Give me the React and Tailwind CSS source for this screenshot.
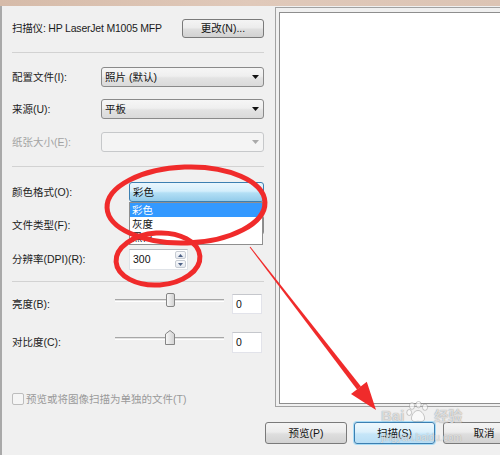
import React from "react";

const FONT = "font-['Liberation_Sans','Noto_Sans_CJK_SC',sans-serif]";

function Caret({ muted }) {
  return (
    <svg width="7" height="4" viewBox="0 0 7 4" className="shrink-0">
      <path d="M0 0H7L3.5 4Z" fill={muted ? "#a9a9a9" : "#121212"} />
    </svg>
  );
}

function Combo({ text, muted, hot, caret = true }) {
  const look = muted
    ? "border-[#c6c8ca] bg-[#f4f4f4]"
    : hot
    ? "border-[#3c7fb1] bg-[linear-gradient(#eaf6fd_0%,#d4eefb_45%,#b3dff5_55%,#93cbea_100%)]"
    : "border-[#8a8a8a] bg-[linear-gradient(#f6f6f6_0%,#efefef_45%,#e3e3e3_55%,#dadada_100%)]";
  return (
    <div
      className={`flex h-full flex-1 items-center justify-between rounded-[3px] border pl-[3px] pr-[4px] ${look}`}
    >
      <span className="text-[10.5px] leading-none text-[#111]">{text}</span>
      {caret && <Caret muted={muted} />}
    </div>
  );
}

function Label({ children, w, muted }) {
  return (
    <div
      className={`shrink-0 text-[10.5px] leading-none ${muted ? "text-[#a3a3a3]" : "text-[#1c1c1c]"}`}
      style={{ width: w }}
    >
      {children}
    </div>
  );
}

function Rule({ className }) {
  return <div className={`h-px bg-[#d2d2d2] ${className}`} />;
}

function Slider({ pointed }) {
  return (
    <div className="relative h-full w-[109px] shrink-0">
      <div className="absolute left-0 right-0 top-[5px] h-[3px] border-t border-b border-t-[#a7a7a7] border-b-[#ffffff] bg-[#e3e3e3]" />
      {pointed ? (
        <svg
          width="10"
          height="15"
          viewBox="0 0 10 15"
          className="absolute left-[50px] top-[-2px]"
        >
          <defs>
            <linearGradient id="thumbFill" x1="0" x2="1" y1="0" y2="0">
              <stop offset="0" stopColor="#f7f7f7" />
              <stop offset="1" stopColor="#d2d2d2" />
            </linearGradient>
          </defs>
          <path
            d="M5 0.5L9.5 4V14.5H0.5V4Z"
            fill="url(#thumbFill)"
            stroke="#858585"
            strokeWidth="1"
            strokeLinejoin="round"
          />
        </svg>
      ) : (
        <div className="absolute left-[51px] top-[-1px] h-[14px] w-[9px] rounded-[2px] border border-[#858585] bg-[linear-gradient(90deg,#f7f7f7,#d2d2d2)]" />
      )}
    </div>
  );
}

function NumField({ value }) {
  return (
    <div className="ml-[8px] flex h-full w-[30px] items-center border border-[#e2e3ea] border-t-[#c5c7cc] bg-white pl-[3px] text-[10.5px] leading-none text-[#111]">
      {value}
    </div>
  );
}

function Spin({ value }) {
  return (
    <div className="flex h-full w-[59px] border border-[#dfe3e8] border-t-[#b5b8bd] bg-white">
      <div className="flex flex-1 items-center pl-[3px] text-[10.5px] leading-none text-[#111]">
        {value}
      </div>
      <div className="flex w-[12px] flex-col gap-px py-px pr-px">
        <div className="flex flex-1 items-center justify-center rounded-[2px] border border-[#c7ccd3] bg-[linear-gradient(#f8f9fb,#e4e8ee)]">
          <svg width="5" height="3" viewBox="0 0 5 3">
            <path d="M0 3L2.5 0L5 3Z" fill="#4d6185" />
          </svg>
        </div>
        <div className="flex flex-1 items-center justify-center rounded-[2px] border border-[#c7ccd3] bg-[linear-gradient(#f8f9fb,#e4e8ee)]">
          <svg width="5" height="3" viewBox="0 0 5 3">
            <path d="M0 0L2.5 3L5 0Z" fill="#4d6185" />
          </svg>
        </div>
      </div>
    </div>
  );
}

function Button({ children, primary, className = "" }) {
  const look = primary
    ? "border-[#3c7fb1] bg-[linear-gradient(#eef8fd_0%,#dcf0fb_45%,#c6e6f8_55%,#b8def5_100%)] shadow-[0_0_0_1px_#a9dcf6]"
    : "border-[#7a7a7a] bg-[linear-gradient(#f4f4f4_0%,#ececec_45%,#dedede_55%,#d2d2d2_100%)]";
  return (
    <div
      className={`flex h-[22px] items-center justify-center rounded-[3px] border text-[10.5px] leading-none text-[#141414] ${look} ${className}`}
    >
      {children}
    </div>
  );
}

function Paw() {
  return (
    <svg width="24" height="22" viewBox="0 0 24 22">
      <g fill="rgba(255,255,255,0.6)" stroke="rgba(110,110,110,0.45)" strokeWidth="0.8">
        <ellipse cx="6" cy="5" rx="2.6" ry="3.4" />
        <ellipse cx="12.5" cy="3.6" rx="2.6" ry="3.2" />
        <ellipse cx="19" cy="6.2" rx="2.6" ry="3.2" />
        <ellipse cx="3.2" cy="11.5" rx="2.4" ry="3" />
        <path d="M12 9.5C8 9.5 5 15 5.5 18c.5 3 4 2.6 6.5 2.2 2.6.4 6 .8 6.5-2.2.5-3-2.5-8.5-6.5-8.5Z" />
      </g>
    </svg>
  );
}

export default function App() {
  return (
    <div className={`relative h-[455px] w-[500px] overflow-hidden bg-[#f0f0f0] ${FONT}`}>
      {/* window title strip */}
      <div className="h-[6px] bg-[linear-gradient(90deg,#d6bba9,#e0c9ba_50%,#dcc4b4)]" />

      <div className="flex h-[449px] border-l-2 border-[#a9a9a9]">
        {/* settings column */}
        <div className="flex w-[263px] shrink-0 flex-col pl-[10px] pr-[1px]">
          <div className="mt-[13px] flex h-[19px] items-center justify-between">
            <span className="text-[10.5px] leading-none tracking-[-0.2px] text-[#1c1c1c]">
              扫描仪: HP LaserJet M1005 MFP
            </span>
            <Button className="w-[82px] !h-[19px]">更改(N)...</Button>
          </div>

          <Rule className="mt-[14px]" />

          <div className="mt-[14px] flex h-[20px] items-center">
            <Label w={89}>配置文件(I):</Label>
            <Combo text="照片 (默认)" />
          </div>
          <div className="mt-[12px] flex h-[20px] items-center">
            <Label w={89}>来源(U):</Label>
            <Combo text="平板" />
          </div>
          <div className="mt-[13px] flex h-[20px] items-center">
            <Label w={89} muted>
              纸张大小(E):
            </Label>
            <Combo text="" muted />
          </div>

          <Rule className="mt-[14px]" />

          <div className="mt-[15px] flex h-[20px] items-center">
            <Label w={117}>颜色格式(O):</Label>
            <Combo text="彩色" hot caret={false} />
          </div>
          <div className="mt-[13px] flex h-[20px] items-center">
            <Label w={117}>文件类型(F):</Label>
            <Combo text="" />
          </div>
          <div className="mt-[14px] flex h-[21px] items-center">
            <Label w={117}>分辨率(DPI)(R):</Label>
            <Spin value="300" />
          </div>

          <Rule className="mt-[11px]" />

          <div className="mt-[12px] flex h-[20px] items-start">
            <div className="flex h-full items-center">
              <Label w={103}>亮度(B):</Label>
            </div>
            <Slider />
            <NumField value="0" />
          </div>
          <div className="mt-[18px] flex h-[21px] items-start">
            <div className="flex h-full items-center">
              <Label w={103}>对比度(C):</Label>
            </div>
            <Slider pointed />
            <NumField value="0" />
          </div>

          <div className="mt-[40px] flex h-[12px] items-center gap-[2px]">
            <div className="h-[12px] w-[12px] rounded-[2px] border border-[#bdbdbd] bg-[#f5f5f5]" />
            <span className="text-[10.5px] leading-none text-[#9a9a9a]">
              预览或将图像扫描为单独的文件(T)
            </span>
          </div>
        </div>

        {/* preview area and actions */}
        <div className="flex flex-1 flex-col">
          <div className="ml-[10px] mt-[1px] w-[240px] border border-[#a2a2a2] pb-[2px] pl-[3px] pt-[4px]">
            <div className="h-[392px] border border-[#8e8e8e] bg-white" />
          </div>
          <div className="mt-[15px] flex gap-[7px]">
            <Button className="w-[82px]">预览(P)</Button>
            <Button primary className="w-[81px]">
              扫描(S)
            </Button>
            <Button className="ml-px w-[82px]">取消</Button>
          </div>
        </div>
      </div>

      {/* open colour list */}
      <div className="absolute left-[129px] top-[202px] w-[134px] border border-[#8f8f8f] bg-white text-[10.5px] leading-none">
        <div className="flex h-[14px] items-center bg-[#3399ff] pl-[2px] text-white">彩色</div>
        <div className="flex h-[14px] items-center pl-[2px] text-[#111]">灰度</div>
        <div className="flex h-[13px] items-center pl-[2px] text-[#111]">黑白</div>
      </div>

      {/* site watermark */}
      <div className="pointer-events-none absolute left-[381px] top-[401px] flex flex-col">
        <div className="flex items-end gap-[2px]">
          <span className="text-[15px] font-bold leading-none text-white/70 [text-shadow:0_0_1px_rgba(80,80,80,0.7)]">
            Bai
          </span>
          <Paw />
          <span className="ml-[2px] text-[14px] font-bold leading-none text-white/70 [text-shadow:0_0_1px_rgba(80,80,80,0.7)]">
            经验
          </span>
        </div>
        <span className="mt-[10px] text-[10px] leading-none text-white/70 [text-shadow:0_0_1px_rgba(80,80,80,0.6)]">
          jingyan.baidu.com
        </span>
      </div>

      {/* red hand-drawn marks */}
      <svg
        className="pointer-events-none absolute left-0 top-0"
        width="500"
        height="455"
        viewBox="0 0 500 455"
      >
        <g fill="none" stroke="#f02b2b" strokeWidth="5">
          <ellipse cx="186" cy="205" rx="79" ry="38" transform="rotate(-2 186 205)" />
          <ellipse cx="158" cy="259" rx="42" ry="26" transform="rotate(-4 158 259)" />
        </g>
        <g fill="#f02b2b">
          <path d="M250.4 246.7 L361 386.5 L357 389.5 L249.6 247.3 Z" />
          <path d="M376 410 L366.8 381.8 L351 394 Z" />
        </g>
      </svg>
    </div>
  );
}
